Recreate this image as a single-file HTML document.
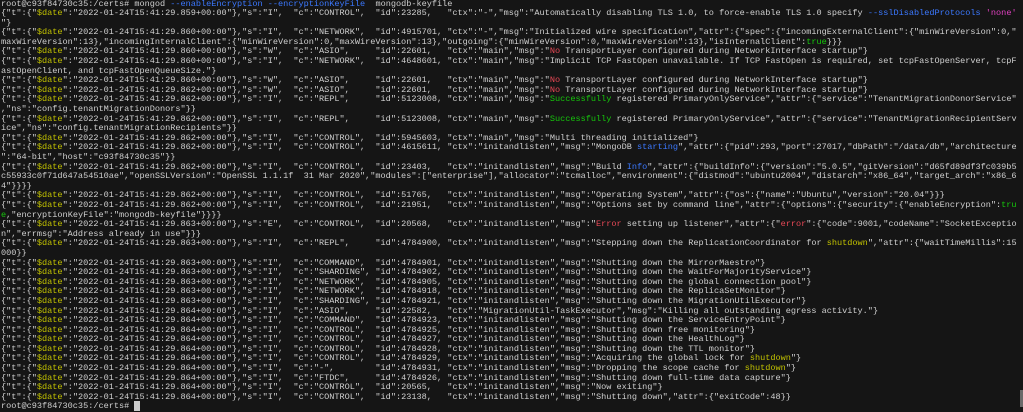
<!DOCTYPE html>
<html><head><meta charset="utf-8"><style>
html,body{margin:0;padding:0;background:#151515;width:1023px;height:407px;overflow:hidden}
pre{margin:0;position:absolute;left:1px;top:-0.5px;font-family:"Liberation Mono",monospace;font-size:8.56px;line-height:9.6px;color:#d0d0d0;white-space:pre}
.y{color:#c1c100}.r{color:#e74856}.g{color:#16c60c}.b{color:#3b78ff}.m{color:#e040c0}
.cur{background:#cccccc}
#sb{position:absolute;left:1020px;top:390px;width:3px;height:17px;background:#6a6a6a}
</style></head><body>
<pre>root@c93f84730c35:/certs# mongod <span class="b">--enableEncryption</span> <span class="b">--encryptionKeyFile</span>  mongodb-keyfile
{"t":{"<span class="y">$date</span>":"2022-01-24T15:41:29.859+00:00"},"s":"I",  "c":"CONTROL",  "id":23285,   "ctx":"-","msg":"Automatically disabling TLS 1.0, to force-enable TLS 1.0 specify <span class="b">--sslDisabledProtocols</span> <span class="m">'none'</span>
"}
{"t":{"<span class="y">$date</span>":"2022-01-24T15:41:29.860+00:00"},"s":"I",  "c":"NETWORK",  "id":4915701, "ctx":"-","msg":"Initialized wire specification","attr":{"spec":{"incomingExternalClient":{"minWireVersion":0,"
maxWireVersion":13},"incomingInternalClient":{"minWireVersion":0,"maxWireVersion":13},"outgoing":{"minWireVersion":0,"maxWireVersion":13},"isInternalClient":<span class="g">true</span>}}}
{"t":{"<span class="y">$date</span>":"2022-01-24T15:41:29.860+00:00"},"s":"W",  "c":"ASIO",     "id":22601,   "ctx":"main","msg":"<span class="r">No</span> TransportLayer configured during NetworkInterface startup"}
{"t":{"<span class="y">$date</span>":"2022-01-24T15:41:29.860+00:00"},"s":"I",  "c":"NETWORK",  "id":4648601, "ctx":"main","msg":"Implicit TCP FastOpen unavailable. If TCP FastOpen is required, set tcpFastOpenServer, tcpF
astOpenClient, and tcpFastOpenQueueSize."}
{"t":{"<span class="y">$date</span>":"2022-01-24T15:41:29.860+00:00"},"s":"W",  "c":"ASIO",     "id":22601,   "ctx":"main","msg":"<span class="r">No</span> TransportLayer configured during NetworkInterface startup"}
{"t":{"<span class="y">$date</span>":"2022-01-24T15:41:29.862+00:00"},"s":"W",  "c":"ASIO",     "id":22601,   "ctx":"main","msg":"<span class="r">No</span> TransportLayer configured during NetworkInterface startup"}
{"t":{"<span class="y">$date</span>":"2022-01-24T15:41:29.862+00:00"},"s":"I",  "c":"REPL",     "id":5123008, "ctx":"main","msg":"<span class="g">Successfully</span> registered PrimaryOnlyService","attr":{"service":"TenantMigrationDonorService"
,"ns":"config.tenantMigrationDonors"}}
{"t":{"<span class="y">$date</span>":"2022-01-24T15:41:29.862+00:00"},"s":"I",  "c":"REPL",     "id":5123008, "ctx":"main","msg":"<span class="g">Successfully</span> registered PrimaryOnlyService","attr":{"service":"TenantMigrationRecipientServ
ice","ns":"config.tenantMigrationRecipients"}}
{"t":{"<span class="y">$date</span>":"2022-01-24T15:41:29.862+00:00"},"s":"I",  "c":"CONTROL",  "id":5945603, "ctx":"main","msg":"Multi threading initialized"}
{"t":{"<span class="y">$date</span>":"2022-01-24T15:41:29.862+00:00"},"s":"I",  "c":"CONTROL",  "id":4615611, "ctx":"initandlisten","msg":"MongoDB <span class="b">starting</span>","attr":{"pid":293,"port":27017,"dbPath":"/data/db","architecture
":"64-bit","host":"c93f84730c35"}}
{"t":{"<span class="y">$date</span>":"2022-01-24T15:41:29.862+00:00"},"s":"I",  "c":"CONTROL",  "id":23403,   "ctx":"initandlisten","msg":"Build <span class="b">Info</span>","attr":{"buildInfo":{"version":"5.0.5","gitVersion":"d65fd89df3fc039b5
c55933c0f71d647a54510ae","openSSLVersion":"OpenSSL 1.1.1f  31 Mar 2020","modules":["enterprise"],"allocator":"tcmalloc","environment":{"distmod":"ubuntu2004","distarch":"x86_64","target_arch":"x86_6
4"}}}}
{"t":{"<span class="y">$date</span>":"2022-01-24T15:41:29.862+00:00"},"s":"I",  "c":"CONTROL",  "id":51765,   "ctx":"initandlisten","msg":"Operating System","attr":{"os":{"name":"Ubuntu","version":"20.04"}}}
{"t":{"<span class="y">$date</span>":"2022-01-24T15:41:29.862+00:00"},"s":"I",  "c":"CONTROL",  "id":21951,   "ctx":"initandlisten","msg":"Options set by command line","attr":{"options":{"security":{"enableEncryption":<span class="g">tru</span>
<span class="g">e</span>,"encryptionKeyFile":"mongodb-keyfile"}}}}
{"t":{"<span class="y">$date</span>":"2022-01-24T15:41:29.863+00:00"},"s":"E",  "c":"CONTROL",  "id":20568,   "ctx":"initandlisten","msg":"<span class="r">Error</span> setting up listener","attr":{"<span class="r">error</span>":{"code":9001,"codeName":"SocketExceptio
n","errmsg":"Address already in use"}}}
{"t":{"<span class="y">$date</span>":"2022-01-24T15:41:29.863+00:00"},"s":"I",  "c":"REPL",     "id":4784900, "ctx":"initandlisten","msg":"Stepping down the ReplicationCoordinator for <span class="y">shutdown</span>","attr":{"waitTimeMillis":15
000}}
{"t":{"<span class="y">$date</span>":"2022-01-24T15:41:29.863+00:00"},"s":"I",  "c":"COMMAND",  "id":4784901, "ctx":"initandlisten","msg":"Shutting down the MirrorMaestro"}
{"t":{"<span class="y">$date</span>":"2022-01-24T15:41:29.863+00:00"},"s":"I",  "c":"SHARDING", "id":4784902, "ctx":"initandlisten","msg":"Shutting down the WaitForMajorityService"}
{"t":{"<span class="y">$date</span>":"2022-01-24T15:41:29.863+00:00"},"s":"I",  "c":"NETWORK",  "id":4784905, "ctx":"initandlisten","msg":"Shutting down the global connection pool"}
{"t":{"<span class="y">$date</span>":"2022-01-24T15:41:29.863+00:00"},"s":"I",  "c":"NETWORK",  "id":4784918, "ctx":"initandlisten","msg":"Shutting down the ReplicaSetMonitor"}
{"t":{"<span class="y">$date</span>":"2022-01-24T15:41:29.863+00:00"},"s":"I",  "c":"SHARDING", "id":4784921, "ctx":"initandlisten","msg":"Shutting down the MigrationUtilExecutor"}
{"t":{"<span class="y">$date</span>":"2022-01-24T15:41:29.864+00:00"},"s":"I",  "c":"ASIO",     "id":22582,   "ctx":"MigrationUtil-TaskExecutor","msg":"Killing all outstanding egress activity."}
{"t":{"<span class="y">$date</span>":"2022-01-24T15:41:29.864+00:00"},"s":"I",  "c":"COMMAND",  "id":4784923, "ctx":"initandlisten","msg":"Shutting down the ServiceEntryPoint"}
{"t":{"<span class="y">$date</span>":"2022-01-24T15:41:29.864+00:00"},"s":"I",  "c":"CONTROL",  "id":4784925, "ctx":"initandlisten","msg":"Shutting down free monitoring"}
{"t":{"<span class="y">$date</span>":"2022-01-24T15:41:29.864+00:00"},"s":"I",  "c":"CONTROL",  "id":4784927, "ctx":"initandlisten","msg":"Shutting down the HealthLog"}
{"t":{"<span class="y">$date</span>":"2022-01-24T15:41:29.864+00:00"},"s":"I",  "c":"CONTROL",  "id":4784928, "ctx":"initandlisten","msg":"Shutting down the TTL monitor"}
{"t":{"<span class="y">$date</span>":"2022-01-24T15:41:29.864+00:00"},"s":"I",  "c":"CONTROL",  "id":4784929, "ctx":"initandlisten","msg":"Acquiring the global lock for <span class="y">shutdown</span>"}
{"t":{"<span class="y">$date</span>":"2022-01-24T15:41:29.864+00:00"},"s":"I",  "c":"-",        "id":4784931, "ctx":"initandlisten","msg":"Dropping the scope cache for <span class="y">shutdown</span>"}
{"t":{"<span class="y">$date</span>":"2022-01-24T15:41:29.864+00:00"},"s":"I",  "c":"FTDC",     "id":4784926, "ctx":"initandlisten","msg":"Shutting down full-time data capture"}
{"t":{"<span class="y">$date</span>":"2022-01-24T15:41:29.864+00:00"},"s":"I",  "c":"CONTROL",  "id":20565,   "ctx":"initandlisten","msg":"Now exiting"}
{"t":{"<span class="y">$date</span>":"2022-01-24T15:41:29.864+00:00"},"s":"I",  "c":"CONTROL",  "id":23138,   "ctx":"initandlisten","msg":"Shutting down","attr":{"exitCode":48}}
root@c93f84730c35:/certs# <span class="cur"> </span></pre>
<div id="sb"></div>
</body></html>
